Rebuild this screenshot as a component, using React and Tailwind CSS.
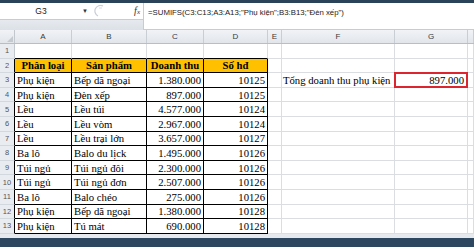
import React from "react";

const rows = [
  ["Phụ kiện", "Bếp dã ngoại", "1.380.000", "10125"],
  ["Phụ kiện", "Đèn xếp", "897.000", "10125"],
  ["Lều", "Lều túi", "4.577.000", "10124"],
  ["Lều", "Lều vòm", "2.967.000", "10124"],
  ["Lều", "Lều trại lớn", "3.657.000", "10127"],
  ["Ba lô", "Balo du lịck", "1.495.000", "10126"],
  ["Túi ngủ", "Túi ngủ đôi", "2.300.000", "10126"],
  ["Túi ngủ", "Túi ngủ đơn", "2.507.000", "10126"],
  ["Ba lô", "Balo chéo", "275.000", "10126"],
  ["Phụ kiện", "Bếp dã ngoại", "1.380.000", "10128"],
  ["Phụ kiện", "Tú mát", "690.000", "10128"],
];

const cols = "grid grid-cols-[15px_57px_75px_57px_64px_14px_113px_73px_1fr]";

function RowHead({ n, table }) {
  return (
    <div
      className={
        "flex items-center justify-center bg-[#e9edf2] border-b border-b-[#d3d8de] text-[7.5px] text-[#555] font-['Liberation_Sans',sans-serif] " +
        (table ? "border-r border-r-black" : "border-r border-r-[#c3c8ce]")
      }
    >
      {n}
    </div>
  );
}

function Cell({ children, table, right, bold, yellow, lastTable, className = "" }) {
  return (
    <div
      className={
        "flex items-center overflow-visible whitespace-nowrap font-['Liberation_Serif',serif] text-[10.7px] text-black px-[2px] " +
        (table ? "border-b border-r border-black " : "border-b border-r border-[#dadde1] ") +
        (yellow ? "bg-[#ffc000] " : "bg-white ") +
        (right ? "justify-end " : "") +
        (bold ? "font-bold justify-center " : "") +
        className
      }
    >
      {children}
    </div>
  );
}

function Plain({ children, className = "" }) {
  return (
    <div
      className={
        "flex items-center whitespace-nowrap border-b border-r border-[#dadde1] bg-white font-['Liberation_Serif',serif] text-[10.7px] text-black " +
        className
      }
    >
      {children}
    </div>
  );
}

export default function App() {
  return (
    <div className="w-[474px] h-[247px] overflow-hidden bg-white flex flex-col">
      <div className="h-[3px] bg-[#2b4359]" />
      {/* formula bar */}
      <div className="h-[27px] flex bg-[#e3e8ee]">
        <div className="w-[143px] flex flex-col">
          <div className="h-[17px] flex items-center bg-white border-b border-[#c7ccd2]">
            <div className="w-[82px] flex items-center justify-center text-[8.5px] text-[#222] font-['Liberation_Sans',sans-serif]">
              G3
            </div>
            <div className="w-[8px] text-[6px] text-[#333] leading-none">▼</div>
            <svg width="14" height="12" viewBox="0 0 14 12" className="ml-[2px]">
              <path d="M6 11 A5 5 0 0 1 11 1" fill="none" stroke="#c9ced4" strokeWidth="1.2" />
              <path d="M7 3 h3" stroke="#d8dce1" strokeWidth="1" />
            </svg>
            <div className="ml-auto mr-[3px] italic font-['Liberation_Serif',serif] text-[10px] text-[#333] leading-none">
              f<span className="text-[7px]">x</span>
            </div>
          </div>
          <div className="flex-1 bg-gradient-to-b from-[#e6eaef] to-[#dce1e7]" />
        </div>
        <div className="flex-1 bg-white border-l border-[#c7ccd2] border-b border-b-[#c7ccd2] pl-[4px] pt-[4px] font-['Liberation_Sans',sans-serif] text-[7.8px] text-[#222] whitespace-nowrap">
          =SUMIFS(C3:C13;A3:A13;"Phụ kiện";B3:B13;"Đèn xếp")
        </div>
      </div>
      {/* column headers */}
      <div className={cols + " h-[14px] bg-gradient-to-b from-[#f1f3f6] to-[#e2e6eb] border-b border-[#b9bec5] font-['Liberation_Sans',sans-serif] text-[8px] text-[#3a3a3a]"}>
        <div className="border-r border-[#c3c8ce] flex items-end justify-end p-[1px]">
          <svg width="6" height="6" viewBox="0 0 6 6"><path d="M6 0 L6 6 L0 6 Z" fill="#c5cad0" /></svg>
        </div>
        {["A", "B", "C", "D", "E", "F", "G", ""].map((c, i) => (
          <div key={i} className="border-r border-[#c9ced4] flex items-center justify-center">
            {c}
          </div>
        ))}
      </div>
      {/* rows */}
      <div className={cols + " auto-rows-[14.6px]"}>
        <RowHead n={1} />
        <Cell table={false} className="border-b-black" />
        <Cell table={false} className="border-b-black" />
        <Cell table={false} className="border-b-black" />
        <Cell table={false} className="border-b-black" />
        <Plain />
        <Plain />
        <Plain />
        <Plain />

        <RowHead n={2} table />
        <Cell table yellow bold>Phân loại</Cell>
        <Cell table yellow bold>Sản phẩm</Cell>
        <Cell table yellow bold>Doanh thu</Cell>
        <Cell table yellow bold>Số hđ</Cell>
        <Plain />
        <Plain />
        <Plain />
        <Plain />

        {rows.map((r, i) => (
          <React.Fragment key={i}>
            <RowHead n={i + 3} table />
            <Cell table>{r[0]}</Cell>
            <Cell table>{r[1]}</Cell>
            <Cell table right>{r[2]}</Cell>
            <Cell table right>{r[3]}</Cell>
            <Plain />
            {i === 0 ? (
              <Plain className="pl-[1px]">Tổng doanh thu phụ kiện</Plain>
            ) : (
              <Plain />
            )}
            {i === 0 ? (
              <Plain className="relative justify-end pr-[3px]">
                <div className="absolute -inset-[1px] border-2 border-[#dd2530]" />
                897.000
              </Plain>
            ) : (
              <Plain />
            )}
            <Plain />
          </React.Fragment>
        ))}
      </div>
      <div className="flex-1 bg-[#e6e9ed]" />
      <div className="h-[9px] bg-[#2d4760]" />
    </div>
  );
}
